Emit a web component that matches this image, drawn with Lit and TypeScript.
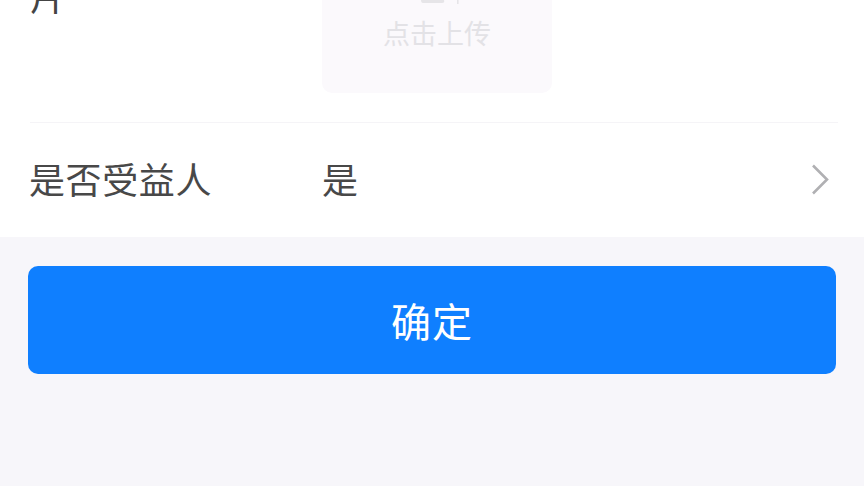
import { LitElement, html, css } from "lit";
import { customElement } from "lit/decorators.js";

@customElement("app-root")
export class AppRoot extends LitElement {
  static styles = css`
    :host {
      display: block;
      width: 864px;
      height: 486px;
      overflow: hidden;
      background: #f7f6fa;
      font-family: "Liberation Sans", "Noto Sans CJK SC", sans-serif;
    }
    .card {
      height: 237px;
      background: #fff;
      padding: 0 26px 0 30px;
      box-sizing: border-box;
      display: flex;
      flex-direction: column;
    }
    .upload-row {
      height: 122px;
      flex: none;
      border-bottom: 1px solid #f5f4f7;
      display: flex;
      overflow: hidden;
    }
    .crop-label {
      width: 292px;
      flex: none;
      margin-top: -19px;
      font-size: 36px;
      line-height: 36px;
      color: #444;
      height: 36px;
    }
    .upload {
      width: 230px;
      height: 93px;
      box-sizing: border-box;
      background: #fbf9fc;
      border-radius: 0 0 10px 10px;
      display: flex;
      flex-direction: column;
      align-items: center;
    }
    .cam {
      width: 60px;
      height: 20px;
      flex: none;
      display: block;
    }
    .upload-text {
      font-size: 27px;
      line-height: 32px;
      color: #e3e2e6;
      margin-top: -1px;
    }
    .row {
      flex: 1;
      display: flex;
      align-items: center;
      padding-top: 4px;
    }
    .label,
    .value {
      font-size: 36px;
      line-height: 40px;
      color: #484848;
    }
    .label {
      width: 293px;
      flex: none;
      margin-left: -1px;
      letter-spacing: 0.6px;
    }
    .value {
      flex: 1;
    }
    .chev {
      width: 24px;
      height: 34px;
      display: block;
      margin-right: 4px;
      margin-top: -4px;
    }
    .btn-wrap {
      padding: 29px 28px 0 28px;
    }
    .btn {
      height: 108px;
      background: #0f7fff;
      border-radius: 10px;
      display: flex;
      align-items: center;
      justify-content: center;
      color: #fff;
      font-size: 40px;
      letter-spacing: 1px;
    }
  `;

  render() {
    return html`
      <div class="card">
        <div class="upload-row">
          <div class="crop-label">片</div>
          <div class="upload">
            <svg class="cam" viewBox="0 0 60 20" fill="none">
              <path d="M14 0 H37 Q38 3 35 3 H16 Q14 3 14 0 Z" fill="#e6e5e8" />
              <rect x="50" y="0" width="1.6" height="4" fill="#e6e5e8" />
            </svg>
            <div class="upload-text">点击上传</div>
          </div>
        </div>
        <div class="row">
          <div class="label">是否受益人</div>
          <div class="value">是</div>
          <svg class="chev" viewBox="0 0 24 34" fill="none">
            <path d="M3 2.5 L17 16.5 L3 30.5" stroke="#b0b0b3" stroke-width="2.6" />
          </svg>
        </div>
      </div>
      <div class="btn-wrap"><div class="btn">确定</div></div>
    `;
  }
}
